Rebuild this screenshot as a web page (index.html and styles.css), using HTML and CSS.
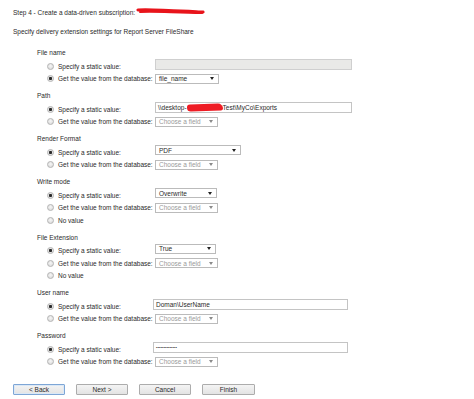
FILE: index.html
```html
<!DOCTYPE html>
<html lang="en">
<head>
    <meta charset="UTF-8">
    <title>Step 4 - Create a data-driven subscription</title>
    <link rel="stylesheet" href="styles.css">
</head>
<body>
    <div class="page">
        <div class="title">
            Step 4 - Create a data-driven subscription:
            <svg class="scribble" width="70" height="9" viewBox="0 0 70 9">
                <path d="M2 3 C 15 2, 30 4, 45 4 S 62 6, 67 5" stroke="#e8141b" stroke-width="3.2" fill="none" stroke-linecap="round"/>
                <path d="M4 5 C 20 4, 40 6, 66 6" stroke="#e8141b" stroke-width="2" fill="none" stroke-linecap="round"/>
            </svg>
        </div>
        <div class="intro">Specify delivery extension settings for Report Server FileShare</div>

        <div class="fields">
            <!-- File name -->
            <div class="group">
                <div class="group-label">File name</div>
                <div class="option">
                    <input type="radio" name="filename">
                    <span class="option-text">Specify a static value:</span>
                    <div class="textbox disabled up"></div>
                </div>
                <div class="option">
                    <input type="radio" name="filename" checked>
                    <span class="option-text">Get the value from the database:</span>
                    <div class="select w64"><span>file_name</span><span class="arrow"></span></div>
                </div>
            </div>

            <!-- Path -->
            <div class="group">
                <div class="group-label">Path</div>
                <div class="option">
                    <input type="radio" name="path" checked>
                    <span class="option-text">Specify a static value:</span>
                    <div class="textbox up">\\desktop-<span class="redact"></span>Test\MyCo\Exports</div>
                </div>
                <div class="option">
                    <input type="radio" name="path">
                    <span class="option-text">Get the value from the database:</span>
                    <div class="select w63 empty"><span>Choose a field</span><span class="arrow"></span></div>
                </div>
            </div>

            <!-- Render Format -->
            <div class="group">
                <div class="group-label">Render Format</div>
                <div class="option">
                    <input type="radio" name="render" checked>
                    <span class="option-text">Specify a static value:</span>
                    <div class="select w86 up"><span>PDF</span><span class="arrow"></span></div>
                </div>
                <div class="option">
                    <input type="radio" name="render">
                    <span class="option-text">Get the value from the database:</span>
                    <div class="select w63 empty"><span>Choose a field</span><span class="arrow"></span></div>
                </div>
            </div>

            <!-- Write mode -->
            <div class="group">
                <div class="group-label">Write mode</div>
                <div class="option">
                    <input type="radio" name="write" checked>
                    <span class="option-text">Specify a static value:</span>
                    <div class="select w62 up"><span>Overwrite</span><span class="arrow"></span></div>
                </div>
                <div class="option">
                    <input type="radio" name="write">
                    <span class="option-text">Get the value from the database:</span>
                    <div class="select w63 empty"><span>Choose a field</span><span class="arrow"></span></div>
                </div>
                <div class="option">
                    <input type="radio" name="write">
                    <span class="option-text">No value</span>
                </div>
            </div>

            <!-- File Extension -->
            <div class="group">
                <div class="group-label">File Extension</div>
                <div class="option">
                    <input type="radio" name="ext" checked>
                    <span class="option-text">Specify a static value:</span>
                    <div class="select w61 up"><span>True</span><span class="arrow"></span></div>
                </div>
                <div class="option">
                    <input type="radio" name="ext">
                    <span class="option-text">Get the value from the database:</span>
                    <div class="select w63 empty"><span>Choose a field</span><span class="arrow"></span></div>
                </div>
                <div class="option">
                    <input type="radio" name="ext">
                    <span class="option-text">No value</span>
                </div>
            </div>

            <!-- User name -->
            <div class="group">
                <div class="group-label">User name</div>
                <div class="option">
                    <input type="radio" name="user" checked>
                    <span class="option-text">Specify a static value:</span>
                    <div class="textbox short up">Doman\UserName</div>
                </div>
                <div class="option">
                    <input type="radio" name="user">
                    <span class="option-text">Get the value from the database:</span>
                    <div class="select w63 empty"><span>Choose a field</span><span class="arrow"></span></div>
                </div>
            </div>

            <!-- Password -->
            <div class="group">
                <div class="group-label">Password</div>
                <div class="option">
                    <input type="radio" name="pass" checked>
                    <span class="option-text">Specify a static value:</span>
                    <div class="textbox short up dots">&bull;&bull;&bull;&bull;&bull;&bull;&bull;&bull;&bull;&bull;&bull;&bull;&bull;&bull;</div>
                </div>
                <div class="option">
                    <input type="radio" name="pass">
                    <span class="option-text">Get the value from the database:</span>
                    <div class="select w63 empty"><span>Choose a field</span><span class="arrow"></span></div>
                </div>
            </div>
        </div>

        <div class="buttons">
            <button class="btn default">&lt; Back</button>
            <button class="btn">Next &gt;</button>
            <button class="btn">Cancel</button>
            <button class="btn wide">Finish</button>
        </div>
    </div>
</body>
</html>
```
FILE: styles.css
```css
/* General */
body {
    margin: 0;
    background: #ffffff;
    color: #2a2a2a;
    font-family: 'Liberation Sans', Arial, sans-serif;
    font-size: 6.5px;
}

.page {
    padding-left: 13px;
    padding-top: 7px;
}

.title {
    line-height: 12px;
    height: 12px;
    display: flex;
    align-items: center;
    gap: 1px;
    white-space: nowrap;
}

.scribble {
    margin-top: -3px;
}

.intro {
    margin-top: 7px;
    line-height: 12px;
}

/* Field groups */
.fields {
    margin-top: 8px;
    padding-left: 24px;
}

.group {
    margin-bottom: 4px;
}

.group-label {
    line-height: 14px;
    height: 14px;
}

.option {
    height: 12.5px;
    display: flex;
    align-items: center;
    padding-left: 10px;
}

.option input[type="radio"] {
    appearance: none;
    -webkit-appearance: none;
    flex: none;
    width: 7px;
    height: 7px;
    margin: 0 4px 0 0;
    border: 1px solid #b4b4b4;
    border-radius: 50%;
    background: radial-gradient(circle at 50% 40%, #f6f6f6, #d6d6d6);
    box-sizing: border-box;
}

.option input[type="radio"]:checked {
    background: radial-gradient(circle, #2a2a2a 0 1.3px, #e4e4e4 1.9px);
}

.option-text {
    flex: none;
    width: 97px;
    white-space: nowrap;
}

/* Text boxes and drop-downs */
.textbox {
    box-sizing: border-box;
    width: 197px;
    height: 11px;
    line-height: 9px;
    border: 1px solid #c4c4c4;
    padding: 0 2px;
    background: #ffffff;
    white-space: nowrap;
    display: flex;
    align-items: center;
}

.textbox.short {
    width: 195px;
    margin-left: -2px;
}

.textbox.disabled {
    background: #e9e9e7;
    border-color: #cfcfcf;
}

.textbox.dots {
    font-size: 4px;
    letter-spacing: 0.1px;
}

.up {
    margin-bottom: 4px;
}

.redact {
    display: inline-block;
    width: 36px;
    height: 7px;
    background: #ee1c24;
    border-radius: 3px 5px 2px 4px;
    transform: rotate(-2deg);
}

.select {
    box-sizing: border-box;
    height: 10px;
    border: 1px solid #bbbbbb;
    padding: 0 4px 0 3px;
    display: flex;
    align-items: center;
    justify-content: space-between;
    background: #ffffff;
    white-space: nowrap;
}

.select.empty {
    color: #9a9a9a;
}

.arrow {
    width: 0;
    height: 0;
    border-left: 2px solid transparent;
    border-right: 2px solid transparent;
    border-top: 3px solid #222222;
}

.select.empty .arrow {
    border-top-color: #8a8a8a;
}

.w61 { width: 61px; }
.w62 { width: 62px; }
.w63 { width: 63px; }
.w64 { width: 64px; }
.w86 { width: 86px; }

/* Wizard buttons */
.buttons {
    margin-top: 16px;
    display: flex;
    gap: 11px;
}

.btn {
    box-sizing: border-box;
    width: 52px;
    height: 11px;
    padding: 0;
    border: 1px solid #acacac;
    border-radius: 1px;
    background: linear-gradient(#f4f4f4, #e3e3e3);
    font-family: inherit;
    font-size: 6.5px;
    color: #2a2a2a;
    line-height: 9px;
}

.btn.default {
    border-color: #7ea6d6;
    box-shadow: inset 0 0 0 1px #dbe8f6;
}

.btn.wide {
    width: 53px;
}
```
